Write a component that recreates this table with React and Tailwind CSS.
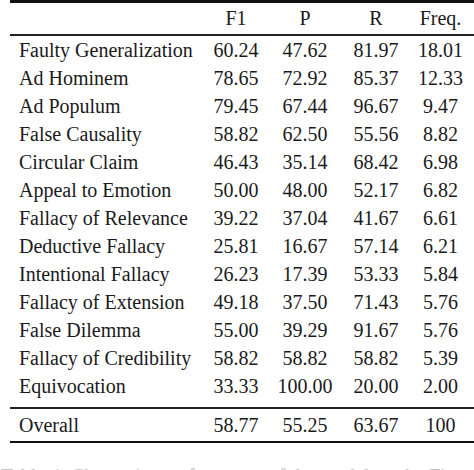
import React from 'react';

const rows = [
  ['Faulty Generalization', '60.24', '47.62', '81.97', '18.01'],
  ['Ad Hominem', '78.65', '72.92', '85.37', '12.33'],
  ['Ad Populum', '79.45', '67.44', '96.67', '9.47'],
  ['False Causality', '58.82', '62.50', '55.56', '8.82'],
  ['Circular Claim', '46.43', '35.14', '68.42', '6.98'],
  ['Appeal to Emotion', '50.00', '48.00', '52.17', '6.82'],
  ['Fallacy of Relevance', '39.22', '37.04', '41.67', '6.61'],
  ['Deductive Fallacy', '25.81', '16.67', '57.14', '6.21'],
  ['Intentional Fallacy', '26.23', '17.39', '53.33', '5.84'],
  ['Fallacy of Extension', '49.18', '37.50', '71.43', '5.76'],
  ['False Dilemma', '55.00', '39.29', '91.67', '5.76'],
  ['Fallacy of Credibility', '58.82', '58.82', '58.82', '5.39'],
  ['Equivocation', '33.33', '100.00', '20.00', '2.00'],
];

const cols = 'grid grid-cols-[194px_64px_74px_68px_61px] h-[28px] leading-[28px]';

const Row = ({ cells }) => (
  <div className={cols}>
    <div className="pl-[9px] whitespace-nowrap">{cells[0]}</div>
    {cells.slice(1).map((c, i) => (
      <div key={i} className="text-center">{c}</div>
    ))}
  </div>
);

const App = () => {
  return (
    <div
      className="relative h-[470px] w-[474px] overflow-hidden bg-white text-[20px] text-[#1a1a1a]"
      style={{ fontFamily: '"Liberation Serif", "Times New Roman", serif' }}
    >
      <div className="ml-[10px]">
        <div className="h-[3px] bg-[#111]" />
        <div className="mt-[1px]">
          <Row cells={['', 'F1', 'P', 'R', 'Freq.']} />
        </div>
        <div className="mt-[2px] h-[1.5px] bg-[#222]" />
        <div className="mt-[0.5px]">
          {rows.map((r) => (
            <Row key={r[0]} cells={r} />
          ))}
        </div>
        <div className="mt-[7px] h-[1.5px] bg-[#222]" />
        <div className="mt-[2.5px]">
          <Row cells={['Overall', '58.77', '55.25', '63.67', '100']} />
        </div>
        <div className="mt-[2px] h-[2px] bg-[#111]" />
      </div>
      <div className="mt-[19px] whitespace-nowrap pl-[1px] leading-[28px] text-[#c4c4c4]">
        Table 4: Class-wise performance of the model on the Fine
      </div>
    </div>
  );
};

export default App;
